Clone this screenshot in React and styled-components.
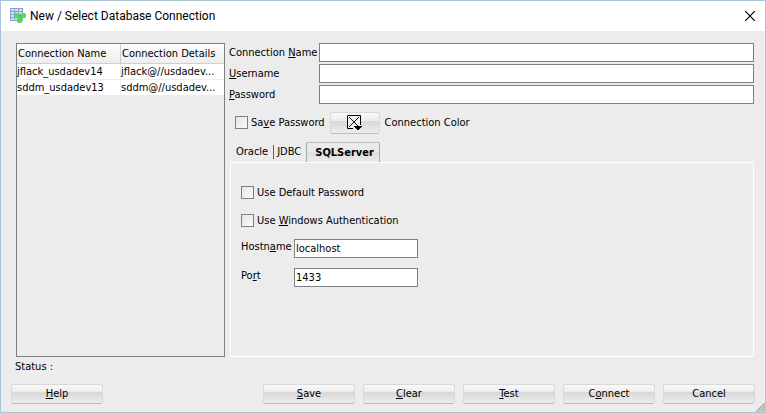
import React, { useState } from 'react';
import styled, { createGlobalStyle } from 'styled-components';

const GlobalStyle = createGlobalStyle`
  * {
    box-sizing: border-box;
  }

  body {
    margin: 0;
    background: #ececec;
  }

  body, button, input, table {
    font-family: 'DejaVu Sans Condensed', 'DejaVu Sans', sans-serif;
    font-size: 11px;
    color: #000000;
  }
`;

// Dialog frame
const Dialog = styled.div`
  position: relative;
  display: flex;
  flex-direction: column;
  min-height: 100vh;
  border: 1px solid #a9c7d6;
  background: #ececec;
  line-height: 14px;
`;

const TitleBar = styled.header`
  display: flex;
  align-items: center;
  height: 30px;
  padding: 0 9px;
  background: #ffffff;
`;

const Title = styled.h1`
  flex: 1;
  margin: 0 0 0 4px;
  font-family: Roboto, 'Open Sans', sans-serif;
  font-size: 12px;
  font-weight: 400;
`;

const CloseButton = styled.button`
  display: flex;
  padding: 1px;
  border: 0;
  background: none;
`;

const Content = styled.main`
  flex: 1;
  display: grid;
  grid-template-columns: 209px 1fr;
  gap: 4px;
  padding: 12px 11px 0 15px;
`;

// Saved connections list
const ListBox = styled.div`
  border: 1px solid #808080;
`;

const ConnectionTable = styled.table`
  width: 100%;
  table-layout: fixed;
  border-collapse: collapse;
  line-height: 15px;

  th {
    height: 19px;
    padding: 0 0 0 1px;
    border-right: 1px solid #d0d0d0;
    border-bottom: 1px solid #d0d0d0;
    background: linear-gradient(#fbfbfb, #eeeeee);
    font-weight: 400;
    text-align: left;
    white-space: nowrap;
  }

  td {
    height: 16px;
    padding: 0;
    border-right: 1px solid #ececec;
    border-bottom: 1px solid #ececec;
    background: #ffffff;
    white-space: nowrap;
  }

  th:last-child,
  td:last-child {
    border-right: 0;
  }
`;

const Details = styled.section`
  display: flex;
  flex-direction: column;
`;

const Credentials = styled.div`
  display: grid;
  grid-template-columns: 90px 1fr;
  gap: 2px 0;
  align-items: center;
`;

const TextInput = styled.input`
  width: 100%;
  height: 19px;
  padding: 0 1px;
  border: 1px solid #808080;
  border-radius: 0;
  outline: 0;
  background: #ffffff;
`;

const OptionsRow = styled.div`
  display: flex;
  align-items: center;
  gap: 5px;
  margin-top: 8px;
  padding-left: 6px;
`;

const CheckLabel = styled.label`
  display: flex;
  align-items: flex-start;
  gap: 3px;
`;

const Checkbox = styled.input`
  appearance: none;
  width: 13px;
  height: 13px;
  margin: 0;
  border: 1px solid #808080;
  background: linear-gradient(135deg, #e6e6e6, #fafafa);

  &:checked {
    background: #808080;
  }
`;

const Button = styled.button`
  width: ${({ $width }) => $width || 92}px;
  height: ${({ $height }) => $height || 20}px;
  padding: 0;
  border: 1px solid #d8d8d8;
  border-bottom-color: #bababa;
  border-radius: 3px;
  background: linear-gradient(#fafafa 0%, #ececec 38%, #d8d8d8 42%, #ededed 100%);
  line-height: 14px;

  svg {
    display: block;
    margin: 0 auto;
  }
`;

const Tabs = styled.div`
  display: flex;
  align-items: flex-end;
  height: 20px;
  margin-top: 8px;
  padding-left: 4px;
`;

const Tab = styled.button`
  height: 20px;
  padding: ${({ $active }) => ($active ? '0 5px 0 8px' : '0 4px 0 2px')};
  border: 1px solid transparent;
  background: none;
  line-height: 18px;

  ${({ $active }) =>
    $active &&
    `
    height: 21px;
    margin-bottom: -1px;
    border-color: #bcbcbc #a8a8a8 #ececec;
    border-radius: 2px 2px 0 0;
    border-bottom: 0;
    background: linear-gradient(#ececec 0%, #e8e8e8 45%, #dfdfdf 48%, #ececec 100%);
    font-weight: 700;
  `}
`;

const TabDivider = styled.span`
  width: 1px;
  height: 14px;
  margin-bottom: 3px;
  background: #606060;
`;

const TabPanel = styled.div`
  flex: 1;
  display: flex;
  flex-direction: column;
  align-items: flex-start;
  margin-left: 1px;
  padding: 23px 10px;
  border: 1px solid #ffffff;
`;

const CheckList = styled.div`
  display: flex;
  flex-direction: column;
  gap: 14px;
  margin-bottom: 11px;
`;

const ServerFields = styled.div`
  display: grid;
  grid-template-columns: 53px 124px;
  gap: 10px 0;

  label {
    padding-top: 1px;
  }
`;

const Status = styled.div`
  padding: 3px 14px 1px;
`;

const Footer = styled.footer`
  display: flex;
  gap: 8px;
  padding: 9px 10px 8px;

  button:first-child {
    margin-right: auto;
  }
`;

const Grip = styled.svg`
  position: absolute;
  right: 0;
  bottom: 0;
`;

const connections = [
  { name: 'jflack_usdadev14', details: 'jflack@//usdadev...' },
  { name: 'sddm_usdadev13', details: 'sddm@//usdadev...' },
];

const AppIcon = () => (
  <svg width="16" height="16" viewBox="0 0 16 16" aria-hidden="true">
    <rect x="0" y="0" width="13" height="13" fill="#86a3d0" />
    <path
      d="M1 1h3v2H1zM5 1h3v2H5zM9 1h3v2H9zM1 4h3v2H1zM5 4h3v2H5zM9 4h3v2H9zM1 7h3v2H1zM5 7h3v2H5zM1 10h3v2H1zM5 10h3v2H5z"
      fill="#d3e1f5"
    />
    <path d="M7 7.5h6M6 8l4 4 3-4" stroke="#49b944" strokeWidth="1.5" fill="none" />
    <rect x="4" y="5" width="5" height="5" rx="1.5" fill="#55dc4c" />
    <rect x="11" y="5" width="5" height="5" rx="1.5" fill="#55dc4c" />
    <rect x="7" y="10" width="5" height="5" rx="1.5" fill="#55dc4c" />
  </svg>
);

const CloseIcon = () => (
  <svg width="10" height="10" viewBox="0 0 10 10" aria-hidden="true">
    <path d="M0 0l10 10M10 0L0 10" stroke="#000000" strokeWidth="1.2" />
  </svg>
);

const ColorIcon = () => (
  <svg width="16" height="16" viewBox="0 0 16 16" aria-hidden="true">
    <rect x=".5" y=".5" width="13" height="13" fill="#f2f2f2" />
    <path d="M6 13.5H.5V.5h13V10" fill="none" stroke="#000000" />
    <path d="M2 2l9 9M12 2L2 12" stroke="#000000" strokeWidth=".9" />
    <path d="M7 11h8v1h-1v1h-1v1h-1v1h-2v-1H9v-1H8v-1H7z" fill="#000000" />
  </svg>
);

const App = () => {
  const [hostname, setHostname] = useState('localhost');
  const [port, setPort] = useState('1433');

  return (
    <>
      <GlobalStyle />
      <Dialog role="dialog" aria-labelledby="dialog-title">
        <TitleBar>
          <AppIcon />
          <Title id="dialog-title">New / Select Database Connection</Title>
          <CloseButton type="button" aria-label="Close">
            <CloseIcon />
          </CloseButton>
        </TitleBar>

        <Content>
          <ListBox>
            <ConnectionTable>
              <thead>
                <tr>
                  <th>Connection Name</th>
                  <th>Connection Details</th>
                </tr>
              </thead>
              <tbody>
                {connections.map((connection) => (
                  <tr key={connection.name}>
                    <td>{connection.name}</td>
                    <td>{connection.details}</td>
                  </tr>
                ))}
              </tbody>
            </ConnectionTable>
          </ListBox>

          <Details>
            <Credentials>
              <label htmlFor="connection-name">Connection <u>N</u>ame</label>
              <TextInput id="connection-name" />
              <label htmlFor="username"><u>U</u>sername</label>
              <TextInput id="username" />
              <label htmlFor="password"><u>P</u>assword</label>
              <TextInput id="password" type="password" />
            </Credentials>

            <OptionsRow>
              <CheckLabel>
                <Checkbox type="checkbox" />
                <span>Sa<u>v</u>e Password</span>
              </CheckLabel>
              <Button type="button" id="color" $width={50} $height={22}>
                <ColorIcon />
              </Button>
              <label htmlFor="color">Connection Color</label>
            </OptionsRow>

            <Tabs role="tablist">
              <Tab type="button" role="tab">Oracle</Tab>
              <TabDivider />
              <Tab type="button" role="tab">JDBC</Tab>
              <Tab type="button" role="tab" aria-selected="true" $active>SQLServer</Tab>
            </Tabs>
            <TabPanel role="tabpanel">
              <CheckList>
                <CheckLabel>
                  <Checkbox type="checkbox" />
                  <span>Use Default Password</span>
                </CheckLabel>
                <CheckLabel>
                  <Checkbox type="checkbox" />
                  <span>Use <u>W</u>indows Authentication</span>
                </CheckLabel>
              </CheckList>
              <ServerFields>
                <label htmlFor="hostname">Hostn<u>a</u>me</label>
                <TextInput id="hostname" value={hostname} onChange={(e) => setHostname(e.target.value)} />
                <label htmlFor="port">Po<u>r</u>t</label>
                <TextInput id="port" value={port} onChange={(e) => setPort(e.target.value)} />
              </ServerFields>
            </TabPanel>
          </Details>
        </Content>

        <Status>Status :</Status>

        <Footer>
          <Button type="button"><u>H</u>elp</Button>
          <Button type="button"><u>S</u>ave</Button>
          <Button type="button"><u>C</u>lear</Button>
          <Button type="button"><u>T</u>est</Button>
          <Button type="button">C<u>o</u>nnect</Button>
          <Button type="button">Cancel</Button>
        </Footer>

        <Grip width="9" height="9" viewBox="0 0 9 9" aria-hidden="true">
          <path d="M0 9l9-9M3 9l6-6M6 9l3-3" stroke="#a8a89c" strokeWidth="1.3" />
        </Grip>
      </Dialog>
    </>
  );
};

export default App;
